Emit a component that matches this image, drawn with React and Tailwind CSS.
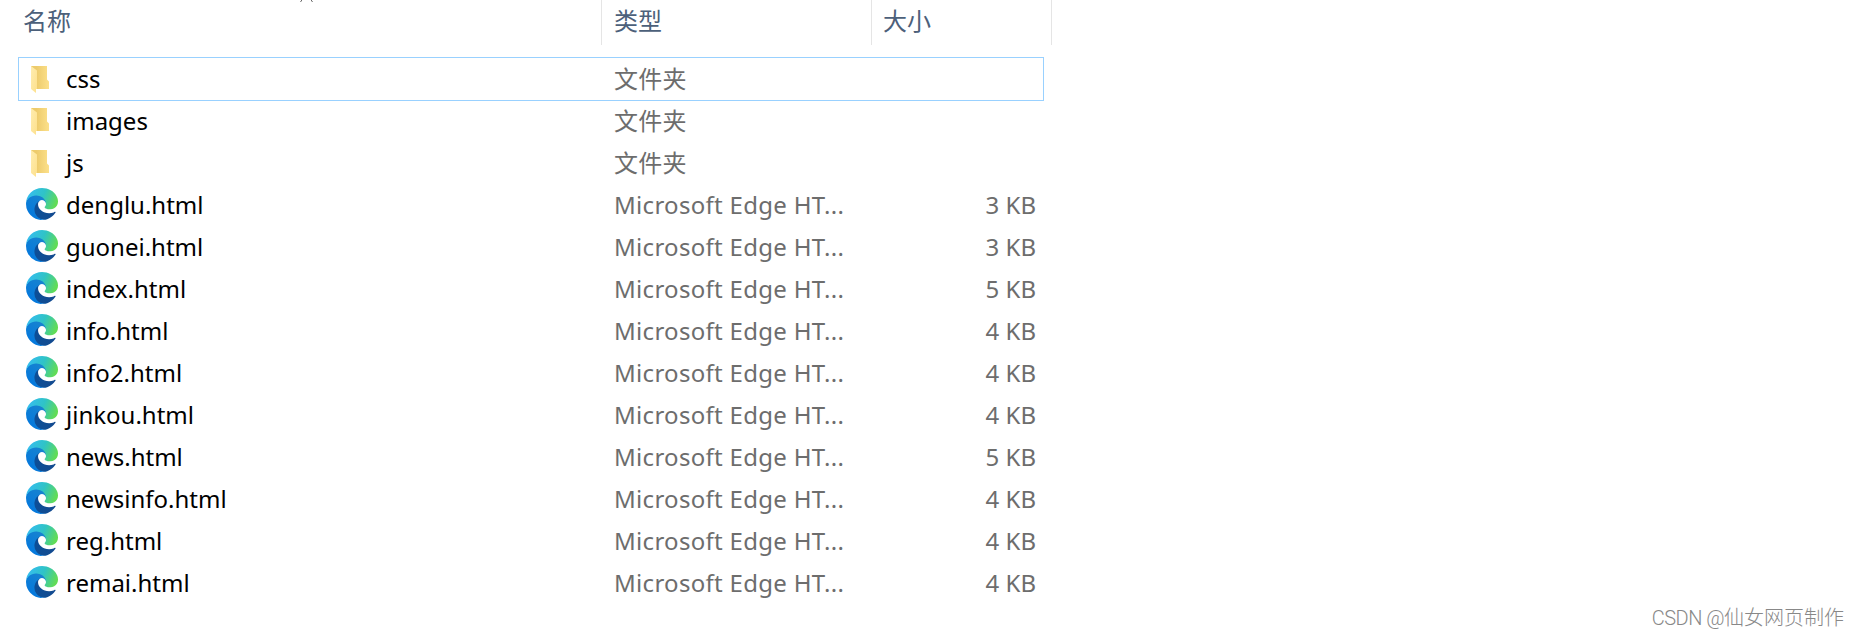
const columns = [
  { label: '名称', className: 'w-[602px] pl-[23px]' },
  { label: '类型', className: 'w-[270px] pl-3' },
  { label: '大小', className: 'w-[180px] pl-[11px]' },
];

const files = [
  { name: 'css', kind: 'folder', selected: true },
  { name: 'images', kind: 'folder' },
  { name: 'js', kind: 'folder' },
  { name: 'denglu.html', kind: 'html', size: '3 KB' },
  { name: 'guonei.html', kind: 'html', size: '3 KB' },
  { name: 'index.html', kind: 'html', size: '5 KB' },
  { name: 'info.html', kind: 'html', size: '4 KB' },
  { name: 'info2.html', kind: 'html', size: '4 KB' },
  { name: 'jinkou.html', kind: 'html', size: '4 KB' },
  { name: 'news.html', kind: 'html', size: '5 KB' },
  { name: 'newsinfo.html', kind: 'html', size: '4 KB' },
  { name: 'reg.html', kind: 'html', size: '4 KB' },
  { name: 'remai.html', kind: 'html', size: '4 KB' },
];

const FolderIcon = () => (
  <svg className="mb-0.5 h-8 w-8" viewBox="0 0 32 32">
    <path d="M5 4H21V17.5L23 19.5V27H5Z" fill="url(#folderBack)" />
    <path d="M5 4L11 8.5V27H10V31L5 27Z" fill="url(#folderFlap)" />
  </svg>
);

const EdgeIcon = () => (
  <svg className="mb-0.5 h-8 w-8" viewBox="4.6 4.9 256 256">
    <path
      d="M235.68 195.46a93.73 93.73 0 0 1-10.54 4.71 101.87 101.87 0 0 1-35.9 6.46c-47.32 0-88.54-32.55-88.54-74.32A31.48 31.48 0 0 1 117.13 105c-42.8 1.8-53.8 46.4-53.8 72.53 0 73.88 68.09 81.37 82.76 81.37 7.91 0 19.84-2.3 27-4.56l1.31-.44a128.34 128.34 0 0 0 66.6-52.8 4 4 0 0 0-5.32-5.64Z"
      fill="url(#edgeNavy)"
    />
    <path
      d="M110.34 246.34A79.2 79.2 0 0 1 87.6 225a80.72 80.72 0 0 1 29.53-120c3.12-1.47 8.45-4.13 15.54-4a32.35 32.35 0 0 1 25.69 13 31.88 31.88 0 0 1 6.36 18.66c0-.21 24.46-79.6-80-79.6-43.9 0-80 41.66-80 78.21a130.15 130.15 0 0 0 12.11 56 128 128 0 0 0 156.38 67.11 75.55 75.55 0 0 1-62.78-8Z"
      fill="url(#edgeBlue)"
    />
    <path
      d="M156.94 153.78c-.81 1.05-3.3 2.5-3.3 5.66 0 2.61 1.7 5.12 4.72 7.23 14.38 10 41.49 8.68 41.56 8.68a59.56 59.56 0 0 0 30.27-8.35 61.38 61.38 0 0 0 30.43-52.88c.26-22.41-8-37.31-11.34-43.91-21.19-41.45-66.93-65.29-116.67-65.29a128 128 0 0 0-128 126.2c.48-36.54 36.8-66.05 80-66.05 3.5 0 23.46.34 42 10.07 16.34 8.58 24.9 18.94 30.85 29.21 6.18 10.67 7.28 24.15 7.28 29.52s-2.74 13.33-7.8 19.91Z"
      fill="url(#edgeGreen)"
    />
  </svg>
);

// Gradients shared by every icon in the list
const IconGradients = () => (
  <svg className="absolute h-0 w-0">
    <defs>
      <linearGradient id="folderBack" x1="0" y1="0" x2="1" y2="0">
        <stop offset="0.3" stopColor="#edcb6c" />
        <stop offset="1" stopColor="#fce08a" />
      </linearGradient>
      <linearGradient id="folderFlap" x1="0" y1="0" x2="1" y2="1">
        <stop offset="0" stopColor="#ffedb0" />
        <stop offset="1" stopColor="#fde08c" />
      </linearGradient>
      <linearGradient id="edgeNavy" x1="63" y1="178" x2="241" y2="178" gradientUnits="userSpaceOnUse">
        <stop offset="0" stopColor="#0c4f98" />
        <stop offset="1" stopColor="#134a8f" />
      </linearGradient>
      <linearGradient id="edgeBlue" x1="150" y1="80" x2="46" y2="220" gradientUnits="userSpaceOnUse">
        <stop offset="0" stopColor="#1883cf" />
        <stop offset="1" stopColor="#0579dc" />
      </linearGradient>
      <linearGradient id="edgeGreen" x1="20" y1="60" x2="235" y2="150" gradientUnits="userSpaceOnUse">
        <stop offset="0" stopColor="#35bdee" />
        <stop offset="0.5" stopColor="#2fc3c6" />
        <stop offset="1" stopColor="#62dc55" />
      </linearGradient>
    </defs>
  </svg>
);

// Lower tips of the sort arrow above the name column
const SortArrow = () => (
  <svg className="absolute top-0 left-[300px] h-0.5 w-[13px]" viewBox="0 0 13 2">
    <path d="M2.5 -1L0.5 2M10.5 -1L12.5 2" stroke="#666666" fill="none" />
  </svg>
);

const FileRow = ({ file }) => (
  <div
    className={`flex h-[42px] items-center ${
      file.selected ? 'outline outline-1 outline-[#99d1ff]' : ''
    }`}
  >
    <div className="flex w-[595px] items-center pl-[7px] text-black">
      {file.kind === 'folder' ? <FolderIcon /> : <EdgeIcon />}
      <span className="pl-2">{file.name}</span>
    </div>
    <div className="w-[270px] tracking-[0.3px] text-[#6d6d6d]">
      {file.kind === 'folder' ? '文件夹' : 'Microsoft Edge HT...'}
    </div>
    <div className="flex-1 pr-[7px] text-right text-[#6d6d6d]">{file.size}</div>
  </div>
);

export default function App() {
  return (
    <div className="relative flex h-[637px] w-full flex-col overflow-hidden bg-white font-['Noto_Sans','Noto_Sans_CJK_SC',sans-serif] text-[24px] leading-[42px] whitespace-nowrap">
      <IconGradients />
      <SortArrow />

      {/* Column headers */}
      <div className="flex h-[45px] text-[#4c607a]">
        {columns.map((column) => (
          <div key={column.label} className={`border-r border-[#e5e5e5] ${column.className}`}>
            {column.label}
          </div>
        ))}
      </div>

      {/* File list */}
      <div className="mt-[13px] ml-[19px] w-[1024px]">
        {files.map((file) => (
          <FileRow key={file.name} file={file} />
        ))}
      </div>

      <div className="absolute right-[15px] bottom-[7px] font-['Roboto','Noto_Sans_CJK_SC',sans-serif] text-[20px] leading-6 font-light text-[#888888]">
        <span className="tracking-[-0.5px]">CSDN @</span>仙女网页制作
      </div>
    </div>
  );
}
